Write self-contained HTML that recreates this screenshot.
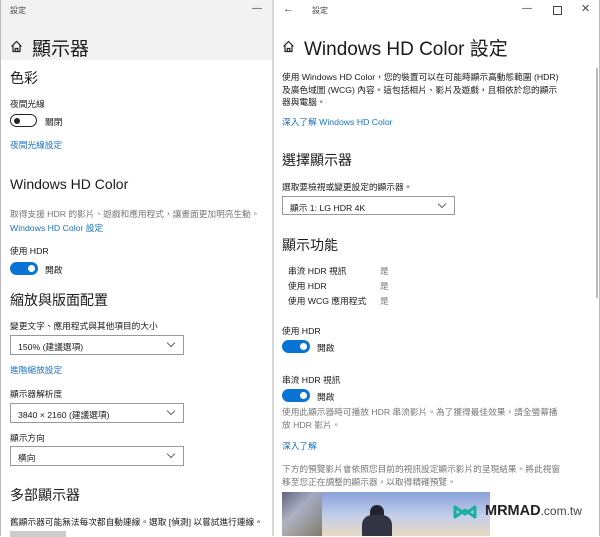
<!DOCTYPE html><html><head><meta charset="utf-8"><style>
body{margin:0;width:600px;height:536px;overflow:hidden;background:#fff;font-family:"Liberation Sans","Noto Sans CJK TC",sans-serif;color:#1a1a1a;position:relative}
.a{position:absolute;white-space:nowrap}
.s{font-size:8.7px}.h{font-size:14px}.t{font-size:19px}
.l{color:#1a73c0}.g{color:#777}
.dd{position:absolute;border:1.5px solid #999;box-sizing:border-box;background:#fff;font-size:8.7px}
.dd span{position:absolute;left:7px;top:4px}
.dd i{position:absolute;right:9px;top:4px;width:5px;height:5px;border-right:1px solid #666;border-bottom:1px solid #666;transform:rotate(45deg)}
.on{position:absolute;width:28px;height:13px;border-radius:7px;background:#0a74d6}
.on:after{content:"";position:absolute;right:3px;top:3px;width:7px;height:7px;border-radius:50%;background:#fff}
.off{position:absolute;width:25px;height:11px;border-radius:7px;border:1.5px solid #222;background:#fff}
.off:after{content:"";position:absolute;left:3px;top:2.5px;width:6px;height:6px;border-radius:50%;background:#222}
</style></head><body>
<div class="a" style="left:0;top:0;width:272px;height:60px;background:#f2f2f2"></div>
<div class="a" style="left:272px;top:0;width:2px;height:536px;background:#d6d6d6"></div>
<div class="a" style="left:599px;top:0;width:1px;height:536px;background:#bbb"></div>
<div class="a" style="left:0;top:0;width:1px;height:536px;background:#bbb"></div>
<div class="a" style="left:596px;top:68px;width:2px;height:230px;background:#bbb"></div>
<!-- left -->
<div class="a" style="left:10px;top:5px;font-size:8px;color:#444">設定</div>
<div class="a" style="left:252px;top:3px;font-size:10px;color:#444">—</div>
<svg class="a" style="left:10px;top:40px" width="13" height="13" viewBox="0 0 13 13"><path d="M1.5 6.5L6.5 1.5L11.5 6.5M3 5v6.5h7V5M5.2 11.5V8.5h2.6v3" fill="none" stroke="#222" stroke-width="1.2"/></svg>
<div class="a t" style="left:32px;top:34px">顯示器</div>
<div class="a h" style="left:10px;top:68px">色彩</div>
<div class="a s" style="left:10px;top:97px">夜間光線</div>
<div class="off" style="left:10px;top:114px"></div>
<div class="a s" style="left:45px;top:115px">關閉</div>
<div class="a s l" style="left:10px;top:138px">夜間光線設定</div>
<div class="a h" style="left:10px;top:176px">Windows HD Color</div>
<div class="a s g" style="left:10px;top:207px">取得支援 HDR 的影片、遊戲和應用程式，讓畫面更加明亮生動。</div>
<div class="a s l" style="left:10px;top:221px">Windows HD Color 設定</div>
<div class="a s" style="left:10px;top:244px">使用 HDR</div>
<div class="on" style="left:10px;top:262px"></div>
<div class="a s" style="left:45px;top:263px">開啟</div>
<div class="a h" style="left:10px;top:290px">縮放與版面配置</div>
<div class="a s" style="left:10px;top:319px">變更文字、應用程式與其他項目的大小</div>
<div class="dd" style="left:10px;top:335px;width:174px;height:20px"><span>150% (建議選項)</span><i></i></div>
<div class="a s l" style="left:10px;top:363px">進階縮放設定</div>
<div class="a s" style="left:10px;top:387px">顯示器解析度</div>
<div class="dd" style="left:10px;top:403px;width:174px;height:20px"><span>3840 × 2160 (建議選項)</span><i></i></div>
<div class="a s" style="left:10px;top:431px">顯示方向</div>
<div class="dd" style="left:10px;top:446px;width:174px;height:20px"><span>橫向</span><i></i></div>
<div class="a h" style="left:10px;top:485px">多部顯示器</div>
<div class="a s" style="left:10px;top:515px">舊顯示器可能無法每次都自動連線。選取 [偵測] 以嘗試進行連線。</div>
<div class="a" style="left:10px;top:531px;width:56px;height:6px;background:#ccc"></div>
<!-- right -->
<div class="a" style="left:283px;top:3px;font-size:11px;color:#444">←</div>
<div class="a" style="left:312px;top:5px;font-size:8px;color:#444">設定</div>
<div class="a" style="left:522px;top:3px;font-size:10px;color:#444">—</div>
<div class="a" style="left:553px;top:6px;width:7px;height:7px;border:1px solid #444"></div>
<div class="a" style="left:581px;top:2px;font-size:11px;color:#444">✕</div>
<svg class="a" style="left:282px;top:40px" width="13" height="13" viewBox="0 0 13 13"><path d="M1.5 6.5L6.5 1.5L11.5 6.5M3 5v6.5h7V5M5.2 11.5V8.5h2.6v3" fill="none" stroke="#222" stroke-width="1.2"/></svg>
<div class="a t" style="left:304px;top:34px">Windows HD Color 設定</div>
<div class="a s" style="left:282px;top:71px;line-height:12.5px">使用 Windows HD Color，您的裝置可以在可能時顯示高動態範圍 (HDR)<br>及廣色域圖 (WCG) 內容。這包括相片、影片及遊戲，且相依於您的顯示<br>器與電腦。</div>
<div class="a s l" style="left:282px;top:115px">深入了解 Windows HD Color</div>
<div class="a h" style="left:282px;top:150px">選擇顯示器</div>
<div class="a s" style="left:282px;top:180px">選取要檢視或變更設定的顯示器。</div>
<div class="dd" style="left:282px;top:196px;width:173px;height:19px"><span>顯示 1: LG HDR 4K</span><i></i></div>
<div class="a h" style="left:282px;top:235px">顯示功能</div>
<div class="a s" style="left:288px;top:264px;line-height:15px">串流 HDR 視訊<br>使用 HDR<br>使用 WCG 應用程式</div>
<div class="a s g" style="left:380px;top:264px;line-height:15px">是<br>是<br>是</div>
<div class="a s" style="left:282px;top:324px">使用 HDR</div>
<div class="on" style="left:282px;top:340px"></div>
<div class="a s" style="left:317px;top:341px">開啟</div>
<div class="a s" style="left:282px;top:373px">串流 HDR 視訊</div>
<div class="on" style="left:282px;top:389px"></div>
<div class="a s" style="left:317px;top:390px">開啟</div>
<div class="a s g" style="left:282px;top:406px;line-height:13px">使用此顯示器時可播放 HDR 串流影片。為了獲得最佳效果，請全螢幕播<br>放 HDR 影片。</div>
<div class="a s l" style="left:282px;top:439px">深入了解</div>
<div class="a s g" style="left:282px;top:463px;line-height:13px">下方的預覽影片會依照您目前的視訊設定顯示影片的呈現結果。將此視窗<br>移至您正在調整的顯示器，以取得精確預覽。</div>
<div class="a" style="left:282px;top:492px;width:208px;height:44px;background:linear-gradient(180deg,#8aa0d8 0%,#c4cfea 55%,#e8d8c0 100%)"></div>
<div class="a" style="left:282px;top:492px;width:40px;height:44px;background:linear-gradient(135deg,#556 0%,#aab 40%,#665 100%);opacity:.8"></div>
<div class="a" style="left:370px;top:505px;width:14px;height:31px;border-radius:7px 7px 0 0;background:#223"></div>
<div class="a" style="left:362px;top:515px;width:30px;height:21px;border-radius:10px 10px 0 0;background:#334"></div>
<svg class="a" style="left:453px;top:505px" width="24" height="14" viewBox="0 0 24 14"><path d="M2 2L12 9L22 2V12L12 5L2 12Z" fill="none" stroke="#1ab0a0" stroke-width="3" stroke-linejoin="round"/></svg>
<div class="a" style="left:485px;top:503px;font-size:14.5px;font-weight:bold;color:#222">MRMAD<span style="font-weight:normal;font-size:12px;color:#444">.com.tw</span></div>
</body></html>
